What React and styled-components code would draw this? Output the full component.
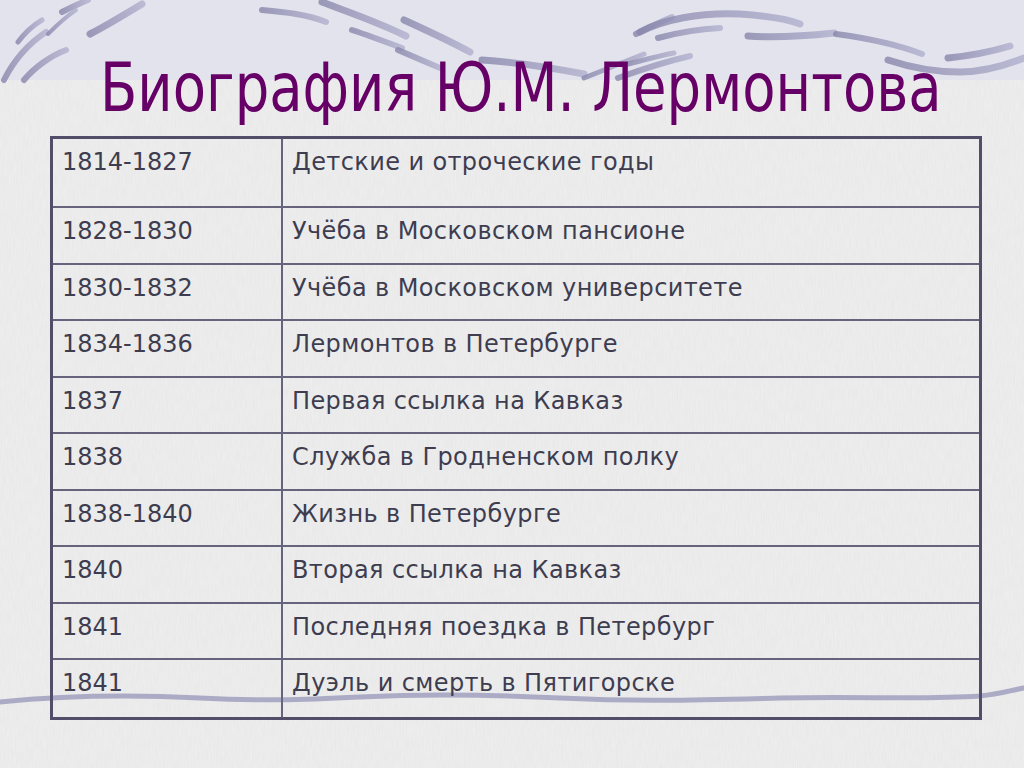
import React from "react";
import styled, { createGlobalStyle } from "styled-components";

const GlobalStyle = createGlobalStyle`
  html, body {
    margin: 0;
    padding: 0;
    background: #efefef;
  }
`;

const Slide = styled.div`
  position: relative;
  width: 1024px;
  height: 768px;
  overflow: hidden;
  background: #efefef;
  font-family: "DejaVu Sans", Verdana, sans-serif;
`;

const Backdrop = styled.svg`
  position: absolute;
  left: 0;
  top: 0;
  width: 1024px;
  height: 768px;
`;

const Content = styled.div`
  position: relative;
  display: flex;
  flex-direction: column;
  padding: 48px 42px 0 50px;
`;

const Title = styled.h1`
  margin: 0 0 0 50px;
  height: 88px;
  font-family: "DejaVu Sans Condensed", "DejaVu Sans", Verdana, sans-serif;
  font-stretch: condensed;
  font-weight: normal;
  font-size: 68px;
  line-height: 80px;
  color: #660066;
  white-space: nowrap;
  transform-origin: left center;
  transform: scaleX(0.89);
`;

const Table = styled.div`
  display: grid;
  grid-template-columns: 230px 1fr;
  grid-template-rows: 69px repeat(9, 1fr);
  height: 578px;
  border: 3px solid #524e69;
`;

const Cell = styled.div`
  padding: 9px 8px 0 9px;
  font-size: 24px;
  line-height: 29px;
  color: #3e3d50;
  white-space: nowrap;
  letter-spacing: ${(p) => (p.$first ? "0" : "0.4px")};
  border-bottom: ${(p) => (p.$last ? "none" : "2px solid #66637d")};
  border-right: ${(p) => (p.$first ? "2px solid #66637d" : "none")};
`;

const rows = [
  ["1814-1827", "Детские и отроческие годы"],
  ["1828-1830", "Учёба в Московском пансионе"],
  ["1830-1832", "Учёба в Московском университете"],
  ["1834-1836", "Лермонтов в Петербурге"],
  ["1837", "Первая ссылка на Кавказ"],
  ["1838", "Служба в Гродненском полку"],
  ["1838-1840", "Жизнь в Петербурге"],
  ["1840", "Вторая ссылка на Кавказ"],
  ["1841", "Последняя поездка в Петербург"],
  ["1841", "Дуэль и смерть в Пятигорске"],
];

// decorative brush strokes of the slide template
const strokes = [
  // left
  { d: "M4 80 C 14 60, 28 44, 46 32", w: 6 },
  { d: "M18 42 C 24 34, 32 26, 42 20", w: 5 },
  { d: "M24 80 C 34 68, 50 56, 66 50", w: 6 },
  { d: "M62 12 C 70 8, 78 4, 88 0", w: 6 },
  { d: "M90 34 C 106 26, 122 16, 142 4", w: 7 },
  { d: "M48 34 C 56 26, 64 18, 76 10", w: 4 },
  // middle
  { d: "M262 10 C 284 12, 306 14, 326 22", w: 6 },
  { d: "M322 2 C 348 12, 378 22, 406 36", w: 7 },
  { d: "M352 30 C 370 36, 386 42, 402 48", w: 6 },
  { d: "M404 20 C 426 30, 448 40, 470 52", w: 7 },
  { d: "M398 50 C 412 56, 426 62, 440 68", w: 6 },
  { d: "M482 60 C 516 62, 552 68, 584 74", w: 7 },
  { d: "M584 78 C 604 70, 624 62, 644 54", w: 5 },
  { d: "M636 34 C 648 28, 660 22, 672 17", w: 6 },
  // right
  { d: "M640 32 C 662 20, 700 12, 740 14 C 770 16, 790 20, 800 24", w: 7 },
  { d: "M658 38 C 680 32, 700 29, 720 28", w: 6 },
  { d: "M748 36 C 776 38, 806 36, 834 33", w: 7 },
  { d: "M836 34 C 866 38, 896 44, 922 54", w: 6 },
  { d: "M948 58 C 968 56, 990 52, 1010 46", w: 7 },
  { d: "M888 60 C 912 68, 938 72, 960 72 C 984 72, 1004 66, 1024 58", w: 7 },
  { d: "M628 64 C 644 60, 658 56, 674 53", w: 5 },
  { d: "M618 78 C 640 70, 664 62, 690 56", w: 6 },
];

function SlideBackdrop() {
  return (
    <Backdrop viewBox="0 0 1024 768">
      <defs>
        <filter id="paper" x="0" y="0" width="100%" height="100%">
          <feTurbulence type="fractalNoise" baseFrequency="0.9 0.08" numOctaves="2" seed="3" />
          <feColorMatrix
            type="matrix"
            values="0 0 0 0 0.6  0 0 0 0 0.6  0 0 0 0 0.62  0 0 0 0.22 0"
          />
        </filter>
        <linearGradient id="stroke" x1="0" y1="0" x2="1" y2="0">
          <stop offset="0" stopColor="#8886ab" />
          <stop offset="1" stopColor="#b0afcd" />
        </linearGradient>
      </defs>
      <rect x="0" y="0" width="1024" height="768" fill="#efefef" />
      <rect x="0" y="0" width="1024" height="768" filter="url(#paper)" />
      <rect x="0" y="0" width="1024" height="80" fill="#e3e3ed" />
      {strokes.map((s, i) => (
        <path
          key={i}
          d={s.d}
          fill="none"
          stroke="url(#stroke)"
          strokeWidth={s.w}
          strokeLinecap="round"
          opacity="0.8"
        />
      ))}
      <path
        d="M0 702 C 60 696, 120 694, 200 698 C 260 701, 300 700, 360 697 C 420 694, 480 694, 560 698 C 640 702, 700 700, 780 698 C 860 696, 920 700, 980 696 C 1000 694, 1012 690, 1024 688"
        fill="none"
        stroke="#9c9bbd"
        strokeWidth="5"
        strokeLinecap="round"
        opacity="0.8"
      />
    </Backdrop>
  );
}

export default function App() {
  return (
    <Slide>
      <GlobalStyle />
      <SlideBackdrop />
      <Content>
        <Title>Биография Ю.М. Лермонтова</Title>
        <Table>
          {rows.map(([years, text], i) => {
            const last = i === rows.length - 1;
            return (
              <React.Fragment key={i}>
                <Cell $first $last={last}>
                  {years}
                </Cell>
                <Cell $last={last}>{text}</Cell>
              </React.Fragment>
            );
          })}
        </Table>
      </Content>
    </Slide>
  );
}
